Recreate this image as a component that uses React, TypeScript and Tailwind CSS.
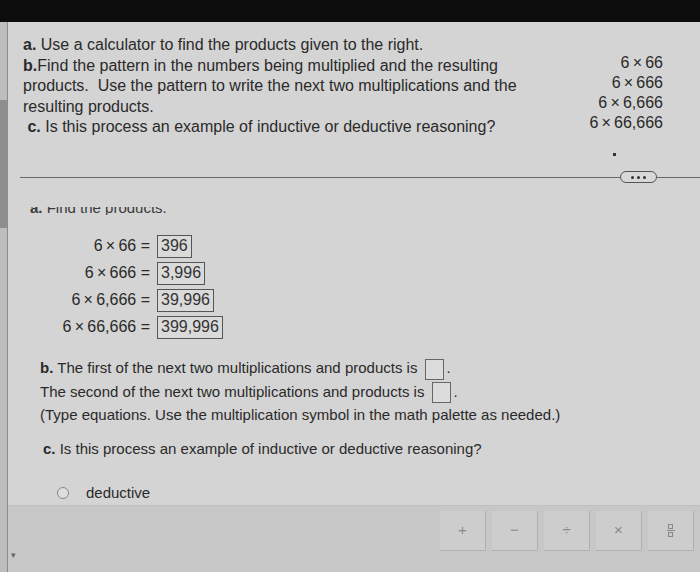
import React from "react";

const font = { fontFamily: "'Liberation Sans', Arial, sans-serif" };

const products = [
  { lhs: "6\u2009×\u200966", ans: "396" },
  { lhs: "6\u2009×\u2009666", ans: "3,996" },
  { lhs: "6\u2009×\u20096,666", ans: "39,996" },
  { lhs: "6\u2009×\u200966,666", ans: "399,996" },
];

const given = ["6\u2009×\u200966", "6\u2009×\u2009666", "6\u2009×\u20096,666", "6\u2009×\u200966,666"];

const AnswerBox = ({ children }: { children?: React.ReactNode }) => (
  <span className="inline-flex h-[23px] items-center border border-[#555] bg-[#dadada] px-[3px] text-[#333]">
    {children}
  </span>
);

const EmptyBox = () => (
  <span className="mx-[3px] inline-block h-[21px] w-[19px] border border-[#666] bg-[#dcdcdc] align-middle" />
);

const PaletteKey = ({ children }: { children: React.ReactNode }) => (
  <div className="flex h-[40px] w-[46px] items-center justify-center border-b border-r border-[#b0b0b0] bg-[#cdcdcd] text-[15px] text-[#8a8a8a]">
    {children}
  </div>
);

export default function App() {
  return (
    <div className="flex h-[572px] w-[700px] flex-col overflow-hidden bg-[#111]" style={font}>
      <div className="h-[22px] shrink-0 bg-[#0c0c0c]" />
      <div className="flex min-h-0 flex-1">
        {/* left edge / scrollbar */}
        <div className="flex w-[8px] shrink-0 flex-col border-r border-[#8c8c8c] bg-[#bdbdbd]">
          <div className="h-[78px]" />
          <div className="h-[128px] bg-[#8e8e8e]" />
          <div className="flex-1" />
        </div>

        <div className="flex min-w-0 flex-1 flex-col bg-[#d4d4d4] text-[#2a2a2a]">
          {/* question header */}
          <div className="flex h-[149px] shrink-0 justify-between pl-[15px] pr-[37px] pt-[13px]">
            <div className="text-[16px] leading-[20.5px]">
              <p>
                <span className="font-bold">a.</span> Use a calculator to find the products given to the right.
              </p>
              <p>
                <span className="font-bold">b.</span>Find the pattern in the numbers being multiplied and the resulting
              </p>
              <p>products. &nbsp;Use the pattern to write the next two multiplications and the</p>
              <p>resulting products.</p>
              <p>
                &nbsp;<span className="font-bold">c.</span> Is this process an example of inductive or deductive reasoning?
              </p>
            </div>
            <div className="flex flex-col items-end pt-[18px] text-[16px] leading-[20px]">
              {given.map((g) => (
                <span key={g}>{g}</span>
              ))}
              <span className="mr-[47px] mt-[20px] h-[3px] w-[3px] bg-[#333]" />
            </div>
          </div>

          {/* divider with more button */}
          <div className="flex h-[12px] shrink-0 items-center pl-[12px]">
            <div className="h-[1px] flex-1 bg-[#6a6a6a]" />
            <div className="flex h-[12px] w-[37px] items-center justify-center gap-[3px] rounded-full border border-[#555] bg-[#d8d8d8]">
              <span className="h-[3px] w-[3px] rounded-full bg-[#333]" />
              <span className="h-[3px] w-[3px] rounded-full bg-[#333]" />
              <span className="h-[3px] w-[3px] rounded-full bg-[#333]" />
            </div>
            <div className="h-[1px] w-[43px] bg-[#6a6a6a]" />
          </div>

          {/* scrolled answer area */}
          <div className="min-h-0 flex-1 overflow-hidden pl-[22px]">
            <div className="mt-[24px] h-[8px] overflow-hidden">
              <p className="-mt-[8px] text-[15px] leading-[17px] text-[#3a3a3a]">
                <span className="font-bold">a.</span> Find the products.
              </p>
            </div>

            <div className="mt-[19px] grid w-fit grid-cols-[120px_auto] gap-x-[7px] gap-y-[3px] text-[16px]">
              {products.map((p) => (
                <React.Fragment key={p.lhs}>
                  <span className="flex h-[23px] items-center justify-end">{p.lhs} =</span>
                  <span>
                    <AnswerBox>{p.ans}</AnswerBox>
                  </span>
                </React.Fragment>
              ))}
            </div>

            <div className="mt-[17px] pl-[10px] text-[15px] leading-[23.5px]">
              <p>
                <span className="font-bold">b.</span> The first of the next two multiplications and products is <EmptyBox />.
              </p>
              <p>
                The second of the next two multiplications and products is <EmptyBox />.
              </p>
              <p>(Type equations. Use the multiplication symbol in the math palette as needed.)</p>
              <p className="mt-[10px] pl-[3px]">
                <span className="font-bold">c.</span> Is this process an example of inductive or deductive reasoning?
              </p>
            </div>

            <div className="mt-[22px] flex items-center gap-[17px] pl-[27px] text-[15px]">
              <span className="h-[12px] w-[12px] rounded-full border border-[#888] bg-[#dedede]" />
              <span>deductive</span>
            </div>
          </div>

          {/* math palette */}
          <div className="flex h-[67px] shrink-0 items-start border-t border-[#c0c0c0] bg-[#c7c7c7] pt-[5px]">
            <div className="flex h-full w-[432px] items-end pb-[12px] pl-[3px]">
              <span className="text-[9px] leading-none text-[#666]">▾</span>
            </div>
            <div className="flex gap-[6px]">
              <PaletteKey>+</PaletteKey>
              <PaletteKey>−</PaletteKey>
              <PaletteKey>÷</PaletteKey>
              <PaletteKey>×</PaletteKey>
              <PaletteKey>
                <span className="flex flex-col items-center gap-[1px]">
                  <span className="h-[5px] w-[5px] border border-[#888]" />
                  <span className="h-[1px] w-[8px] bg-[#888]" />
                  <span className="h-[5px] w-[5px] border border-[#888]" />
                </span>
              </PaletteKey>
            </div>
          </div>
        </div>
      </div>
    </div>
  );
}
